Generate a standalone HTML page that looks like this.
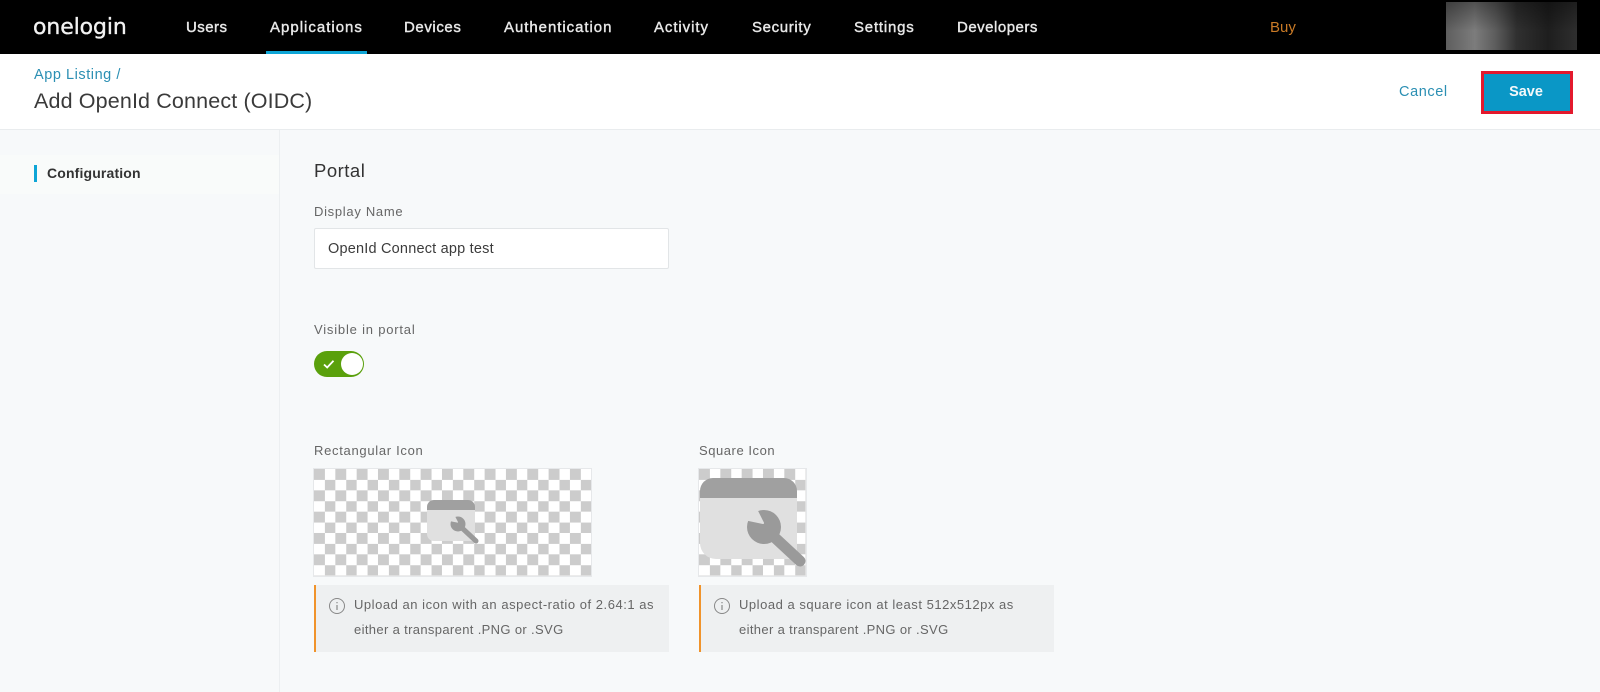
<!DOCTYPE html>
<html><head><meta charset="utf-8"><title>Add OpenId Connect (OIDC)</title>
<style>
html,body{margin:0;padding:0}
body{position:relative;width:1600px;height:692px;overflow:hidden;background:#f7f9fa;font-family:"Liberation Sans",sans-serif;color:#333}
.a{position:absolute}
.t{position:absolute;white-space:nowrap;line-height:20px}
.n{color:#e8e8e8;font-size:15px;top:18px;-webkit-text-stroke:.4px #e8e8e8}
.l{color:#666;font-size:13px;letter-spacing:.7px}
.c{position:absolute;top:469px;height:107px;background:conic-gradient(#fff 25%,#ccc 0 50%,#fff 0 75%,#ccc 0);background-size:21.33px 21.33px;outline:1px solid #e6e8ea}
.note{position:absolute;top:585px;height:67px;background:#eef0f1;border-left:2px solid #f0932b;box-sizing:border-box}
.nt{color:#666;font-size:13px;letter-spacing:.35px}
</style></head><body>
<div class="a" style="left:0;top:0;width:1600px;height:54px;background:#000"></div>
<div class="t" style="left:33px;top:18px;color:#f2f2f2;font-family:'DejaVu Sans',sans-serif;font-size:22px;letter-spacing:-.1px;-webkit-text-stroke:.35px #f2f2f2">onelogin</div>
<div class="t n" style="left:186px;letter-spacing:.45px">Users</div>
<div class="t n" style="left:270px;letter-spacing:1px">Applications</div>
<div class="a" style="left:266px;top:51px;width:101px;height:3px;background:#0ea5d6"></div>
<div class="t n" style="left:404px;letter-spacing:.58px">Devices</div>
<div class="t n" style="left:504px;letter-spacing:.95px">Authentication</div>
<div class="t n" style="left:654px;letter-spacing:.92px">Activity</div>
<div class="t n" style="left:752px;letter-spacing:.65px">Security</div>
<div class="t n" style="left:854px;letter-spacing:.8px">Settings</div>
<div class="t n" style="left:957px;letter-spacing:.5px">Developers</div>
<div class="t" style="left:1270px;top:18px;color:#c97a26;font-size:15px">Buy</div>
<div class="a" style="left:1446px;top:2px;width:131px;height:48px;background:linear-gradient(180deg,rgba(0,0,0,.35),rgba(0,0,0,0) 60%),linear-gradient(90deg,#5e5e5e 0,#7c7c7c 22%,#5c5c5c 38%,#303030 54%,#1e1e1e 78%,#2e2e2e 100%)"></div>

<div class="a" style="left:0;top:54px;width:1600px;height:75px;background:#fff;border-bottom:1px solid #e9ecee"></div>
<div class="t" style="left:34px;top:65px;color:#2b8fb3;font-size:14.5px;letter-spacing:.55px">App Listing /</div>
<div class="t" style="left:34px;top:91px;color:#3a3a3a;font-size:21.5px;letter-spacing:.14px">Add OpenId Connect (OIDC)</div>
<div class="t" style="left:1399px;top:82px;color:#2b8fb3;font-size:14.5px;letter-spacing:.6px">Cancel</div>
<div class="a" style="left:1481px;top:71px;width:92px;height:43px;box-sizing:border-box;background:#0a97c6;border:3px solid #e3192d"></div>
<div class="t" style="left:1480px;width:92px;text-align:center;top:82px;color:#f4f8fa;font-size:14.5px;font-weight:bold">Save</div>

<div class="a" style="left:279px;top:130px;width:1px;height:562px;background:#eceff1"></div>
<div class="a" style="left:0;top:155px;width:279px;height:39px;background:#f9fbfa"></div>
<div class="a" style="left:34px;top:165px;width:3px;height:17px;background:#0ea5d6"></div>
<div class="t" style="left:47px;top:163px;color:#333;font-size:14px;font-weight:bold;letter-spacing:.15px">Configuration</div>

<div class="t" style="left:314px;top:161px;color:#333;font-size:18.5px;letter-spacing:.5px">Portal</div>
<div class="t l" style="left:314px;top:202px">Display Name</div>
<div class="a" style="left:314px;top:228px;width:355px;height:41px;box-sizing:border-box;background:#fff;border:1px solid #e2e5e7;border-radius:2px"></div>
<div class="t" style="left:328px;top:239px;color:#3c3c3c;font-size:14.5px;letter-spacing:.2px">OpenId Connect app test</div>

<div class="t l" style="left:314px;top:320px;letter-spacing:.8px">Visible in portal</div>
<div class="a" style="left:314px;top:351px;width:50px;height:26px;border-radius:13px;background:#5aa00c"></div>
<div class="a" style="left:341px;top:353px;width:22px;height:22px;border-radius:50%;background:#fff"></div>
<svg class="a" style="left:322px;top:358px" width="14" height="12" viewBox="0 0 14 12"><path d="M2 6.5 L5.2 9.5 L11.500 2.800" fill="none" stroke="#fff" stroke-width="1.800"/></svg>

<div class="t l" style="left:314px;top:441px">Rectangular Icon</div>
<div class="c" style="left:314px;width:277px"></div>
<svg class="a" style="left:314px;top:469px" width="277" height="107" viewBox="314 469 277 107">
<path d="M427 510 V507 a7 7 0 0 1 7-7 h34 a7 7 0 0 1 7 7 V510 Z" fill="#a0a0a0"/>
<path d="M427 510 H475 V541 H434 a7 7 0 0 1-7-7 Z" fill="#e0e0e0"/>
<circle cx="458" cy="524" r="7.500" fill="#9a9a9a"/>
<path d="M449.200 520.500 L454 515.200 L457.600 522.200 Z" fill="#e0e0e0" stroke="#e0e0e0" stroke-width=".9" stroke-linejoin="round"/>
<path d="M461 527 L476 541" stroke="#9a9a9a" stroke-width="5" stroke-linecap="round"/>
</svg>
<div class="note" style="left:314px;width:355px"></div>
<svg class="a" style="left:328px;top:597px" width="18" height="18" viewBox="0 0 18 18"><circle cx="9" cy="9" r="7.500" fill="none" stroke="#888" stroke-width="1"/><path d="M9 8 V13 M9 5 V6.300" stroke="#888" stroke-width="1.200"/></svg>
<div class="t nt" style="left:354px;top:595px;letter-spacing:.53px">Upload an icon with an aspect-ratio of 2.64:1 as</div>
<div class="t nt" style="left:354px;top:620px">either a transparent .PNG or .SVG</div>

<div class="t l" style="left:699px;top:441px;letter-spacing:.55px">Square Icon</div>
<div class="c" style="left:699px;width:107px"></div>
<svg class="a" style="left:699px;top:469px" width="107" height="107" viewBox="699 469 107 107">
<path d="M700 498 V491 a13 13 0 0 1 13-13 h71 a13 13 0 0 1 13 13 V498 Z" fill="#a0a0a0"/>
<path d="M700 498 H797 V559 H716 a16 16 0 0 1-16-16 Z" fill="#e0e0e0"/>
<circle cx="764" cy="527" r="17" fill="#9a9a9a"/>
<path d="M744 519 L755 507 L763 523 Z" fill="#e0e0e0" stroke="#e0e0e0" stroke-width="2" stroke-linejoin="round"/>
<path d="M772 535 L800 561" stroke="#9a9a9a" stroke-width="11" stroke-linecap="round"/>
</svg>
<div class="note" style="left:699px;width:355px"></div>
<svg class="a" style="left:713px;top:597px" width="18" height="18" viewBox="0 0 18 18"><circle cx="9" cy="9" r="7.500" fill="none" stroke="#888" stroke-width="1"/><path d="M9 8 V13 M9 5 V6.300" stroke="#888" stroke-width="1.200"/></svg>
<div class="t nt" style="left:739px;top:595px;letter-spacing:.52px">Upload a square icon at least 512x512px as</div>
<div class="t nt" style="left:739px;top:620px">either a transparent .PNG or .SVG</div>
</body></html>
